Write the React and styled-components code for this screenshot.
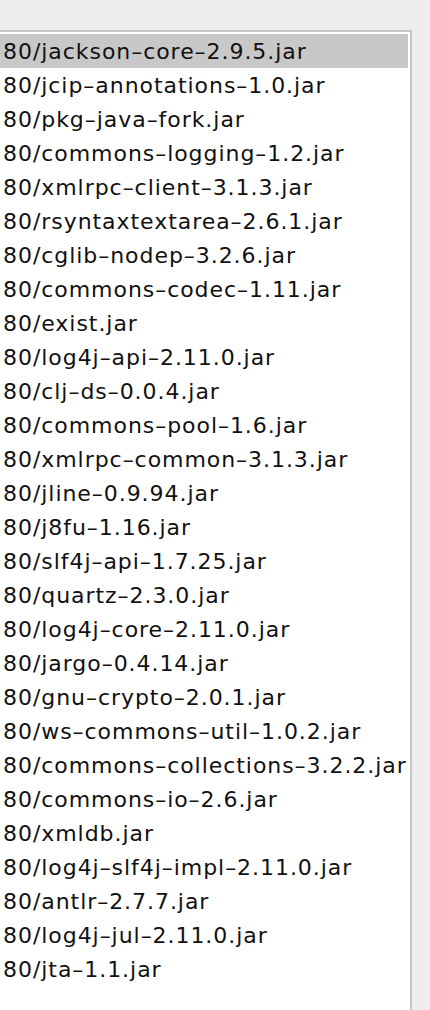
import React from "react";
import styled, { createGlobalStyle } from "styled-components";

const Global = createGlobalStyle`
  html, body { margin: 0; padding: 0; background: #eeeeee; }
  body { width: 430px; height: 1010px; overflow: hidden; }
`;

const Page = styled.div`
  padding-top: 30px;
  height: 1010px;
  box-sizing: border-box;
  overflow: hidden;
`;

const ListBox = styled.div`
  width: 412px;
  height: 1200px;
  box-sizing: border-box;
  border-top: 2px solid #c6c6c6;
  border-right: 2px solid #c6c6c6;
  background: #ffffff;
  padding: 2px 2px 0 0;
  display: flex;
  flex-direction: column;
`;

const Row = styled.div`
  height: 34px;
  flex: none;
  display: flex;
  align-items: center;
  padding-left: 3px;
  background: ${(p) => (p.$selected ? "#c8c8c8" : "transparent")};
  font-family: "DejaVu Sans", "Liberation Sans", sans-serif;
  font-size: 22px;
  letter-spacing: 0.95px;
  color: #111111;
  white-space: nowrap;
`;

const items = [
  "jackson-core-2.9.5.jar",
  "jcip-annotations-1.0.jar",
  "pkg-java-fork.jar",
  "commons-logging-1.2.jar",
  "xmlrpc-client-3.1.3.jar",
  "rsyntaxtextarea-2.6.1.jar",
  "cglib-nodep-3.2.6.jar",
  "commons-codec-1.11.jar",
  "exist.jar",
  "log4j-api-2.11.0.jar",
  "clj-ds-0.0.4.jar",
  "commons-pool-1.6.jar",
  "xmlrpc-common-3.1.3.jar",
  "jline-0.9.94.jar",
  "j8fu-1.16.jar",
  "slf4j-api-1.7.25.jar",
  "quartz-2.3.0.jar",
  "log4j-core-2.11.0.jar",
  "jargo-0.4.14.jar",
  "gnu-crypto-2.0.1.jar",
  "ws-commons-util-1.0.2.jar",
  "commons-collections-3.2.2.jar",
  "commons-io-2.6.jar",
  "xmldb.jar",
  "log4j-slf4j-impl-2.11.0.jar",
  "antlr-2.7.7.jar",
  "log4j-jul-2.11.0.jar",
  "jta-1.1.jar",
];

export default function App() {
  return (
    <>
      <Global />
      <Page>
        <ListBox>
          {items.map((name, i) => (
            <Row key={name} $selected={i === 0}>
              80/{name.replace(/-/g, "\u2013")}
            </Row>
          ))}
        </ListBox>
      </Page>
    </>
  );
}
